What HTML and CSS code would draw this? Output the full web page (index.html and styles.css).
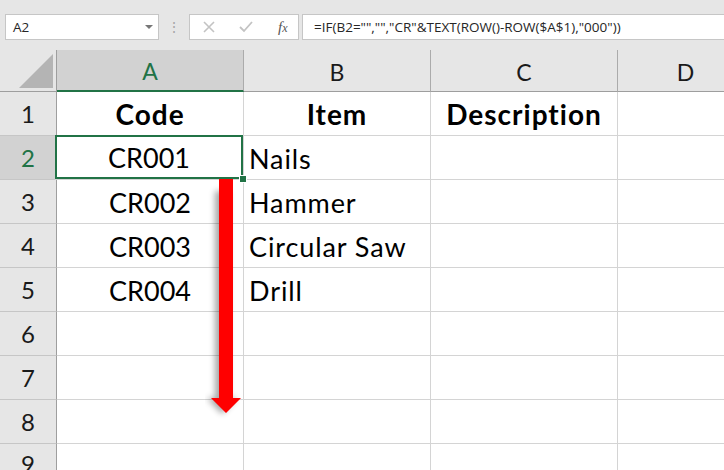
FILE: index.html
```html
<!DOCTYPE html>
<html lang="en">
<head>
    <meta charset="UTF-8">
    <title>Sheet - Code column</title>
    <link rel="stylesheet" href="styles.css">
</head>
<body>
    <div class="formula-bar">
        <div class="name-box">
            <span>A2</span>
            <span class="drop"></span>
        </div>
        <div class="grip">&#8942;</div>
        <div class="fx-buttons">
            <svg class="btn" width="14" height="14" viewBox="0 0 14 14"><path d="M2 2 L12 12 M12 2 L2 12" stroke="#c3c3c3" stroke-width="1.6" fill="none"/></svg>
            <svg class="btn" width="16" height="14" viewBox="0 0 16 14"><path d="M2 7 L6 11 L14 2" stroke="#c3c3c3" stroke-width="1.8" fill="none"/></svg>
            <span class="fx">f<i>x</i></span>
        </div>
        <div class="formula">=IF(B2="","","CR"&amp;TEXT(ROW()-ROW($A$1),"000"))</div>
    </div>

    <div class="sheet">
        <div class="corner"><div class="tri"></div></div>
        <div class="col-head active">A</div>
        <div class="col-head">B</div>
        <div class="col-head">C</div>
        <div class="col-head">D</div>

        <div class="row-head">1</div>
        <div class="cell center bold">Code</div>
        <div class="cell center bold">Item</div>
        <div class="cell center bold">Description</div>
        <div class="cell"></div>

        <div class="row-head active">2</div>
        <div class="cell center selected">CR001</div>
        <div class="cell item">Nails</div>
        <div class="cell"></div>
        <div class="cell"></div>

        <div class="row-head">3</div>
        <div class="cell center">CR002</div>
        <div class="cell item">Hammer</div>
        <div class="cell"></div>
        <div class="cell"></div>

        <div class="row-head">4</div>
        <div class="cell center">CR003</div>
        <div class="cell item">Circular Saw</div>
        <div class="cell"></div>
        <div class="cell"></div>

        <div class="row-head">5</div>
        <div class="cell center">CR004</div>
        <div class="cell item">Drill</div>
        <div class="cell"></div>
        <div class="cell"></div>

        <div class="row-head">6</div>
        <div class="cell"></div><div class="cell"></div><div class="cell"></div><div class="cell"></div>
        <div class="row-head">7</div>
        <div class="cell"></div><div class="cell"></div><div class="cell"></div><div class="cell"></div>
        <div class="row-head">8</div>
        <div class="cell"></div><div class="cell"></div><div class="cell"></div><div class="cell"></div>
        <div class="row-head last">9</div>
        <div class="cell"></div><div class="cell"></div><div class="cell"></div><div class="cell"></div>

        <!-- drag arrow drawn over the grid -->
        <svg class="arrow" width="50" height="250" viewBox="0 0 50 250">
            <defs>
                <filter id="shadow" x="-50%" y="-20%" width="200%" height="140%">
                    <feGaussianBlur stdDeviation="3"/>
                </filter>
            </defs>
            <path d="M12 8 H26 V215 H34 L19 231 L4 215 H12 Z" fill="#000" opacity="0.35" filter="url(#shadow)" transform="translate(-2 4)"/>
            <path d="M14 0 H28 V219 H36 L21 234 L6 219 H14 Z" fill="#ff0000"/>
        </svg>
    </div>
</body>
</html>
```

FILE: styles.css
```css
body {
    margin: 0;
    background-color: #ffffff;
    font-family: Lato, "Open Sans", sans-serif;
    overflow: hidden;
}

.formula-bar {
    height: 50px;
    background-color: #e6e6e6;
    display: flex;
    align-items: flex-start;
    padding-top: 14px;
    box-sizing: border-box;
    font-family: "Open Sans", "Noto Sans", sans-serif;
    font-size: 13.5px;
    color: #262626;
}
.name-box {
    margin-left: 5px;
    width: 154px;
    height: 26px;
    box-sizing: border-box;
    border: 1px solid #c6c6c6;
    background: white;
    display: flex;
    align-items: center;
    justify-content: space-between;
    padding: 0 5px 0 7px;
}
.drop {
    width: 0;
    height: 0;
    border-left: 4px solid transparent;
    border-right: 4px solid transparent;
    border-top: 4px solid #777;
}
.grip {
    width: 30px;
    text-align: center;
    color: #a6a6a6;
    line-height: 26px;
    font-size: 14px;
}
.fx-buttons {
    width: 110px;
    height: 26px;
    box-sizing: border-box;
    border: 1px solid #c6c6c6;
    background: white;
    display: flex;
    align-items: center;
    padding-left: 12px;
    gap: 22px;
}
.fx {
    font-family: "Liberation Serif", serif;
    font-style: italic;
    font-size: 15px;
    color: #555;
    margin-left: 2px;
}
.fx i {
    font-size: 12px;
}
.formula {
    margin-left: 3px;
    flex: 1;
    height: 26px;
    box-sizing: border-box;
    border: 1px solid #c6c6c6;
    border-right: none;
    background: white;
    line-height: 24px;
    padding-left: 11px;
    white-space: nowrap;
}

.sheet {
    position: relative;
    width: 724px;
    overflow: hidden;
    display: grid;
    grid-template-columns: 57px 187px 187px 187px 136px;
    grid-template-rows: 42px repeat(9, 44px);
}
.corner {
    background: #e6e6e6;
    border-right: 1px solid #9e9e9e;
    border-bottom: 1px solid #9e9e9e;
    box-sizing: border-box;
    position: relative;
}
.tri {
    position: absolute;
    right: 3px;
    bottom: 3px;
    width: 34px;
    height: 34px;
    background: #b4b4b4;
    clip-path: polygon(100% 0, 100% 100%, 0 100%);
}
.col-head {
    background: #e6e6e6;
    border-right: 1px solid #ababab;
    border-bottom: 1px solid #9e9e9e;
    box-sizing: border-box;
    display: flex;
    align-items: center;
    justify-content: center;
    font-size: 23px;
    color: #1a1a1a;
    padding-top: 2px;
}
.col-head.active {
    background: #d2d2d2;
    color: #217346;
    border-bottom: 2px solid #217346;
}
.row-head {
    background: #e6e6e6;
    border-right: 1px solid #9e9e9e;
    border-bottom: 1px solid #c6c6c6;
    box-sizing: border-box;
    display: flex;
    align-items: center;
    justify-content: center;
    font-size: 24px;
    color: #1a1a1a;
}
.row-head.last {
    align-items: flex-start;
    padding-top: 5px;
}
.row-head.active {
    background: #d2d2d2;
    color: #217346;
}
.cell {
    border-right: 1px solid #d4d4d4;
    border-bottom: 1px solid #d4d4d4;
    box-sizing: border-box;
    display: flex;
    align-items: center;
    padding-left: 5px;
    padding-top: 1px;
    font-size: 27px;
    color: #000;
    white-space: nowrap;
}
.cell.item {
    letter-spacing: 0.9px;
}
.cell.center {
    justify-content: center;
    padding-left: 0;
}
.cell.bold {
    font-weight: bold;
    font-size: 28px;
    letter-spacing: 1px;
}
.cell.selected {
    position: relative;
    box-shadow: inset 0 0 0 2px #217346;
    margin: -1px 0 0 -2px;
}
.cell.selected::after {
    content: "";
    position: absolute;
    right: -4px;
    bottom: -4px;
    width: 6px;
    height: 6px;
    background: #217346;
    border: 1px solid white;
}
.arrow {
    position: absolute;
    left: 205px;
    top: 129px;
}
```
